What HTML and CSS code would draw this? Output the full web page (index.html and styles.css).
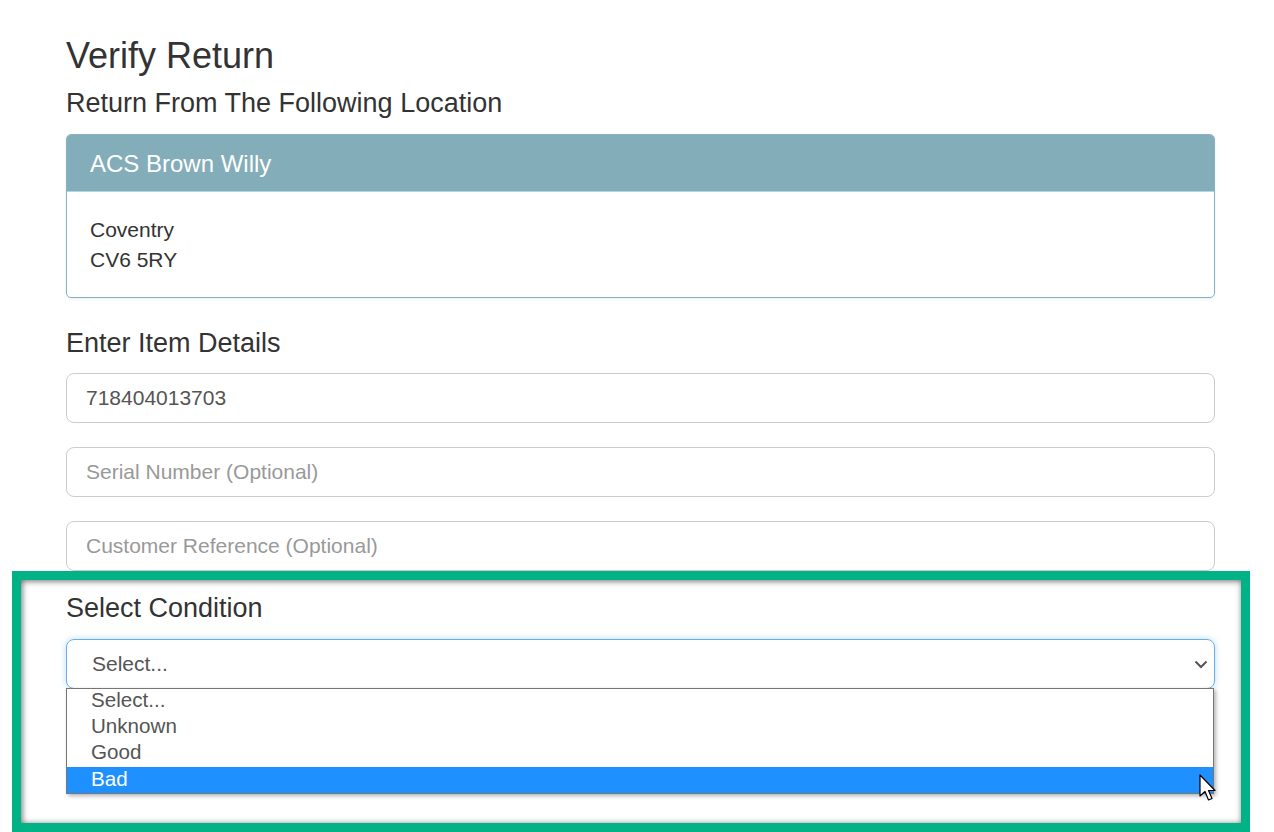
FILE: index.html
```html
<!DOCTYPE html>
<html lang="en">
<head>
    <meta charset="UTF-8">
    <meta name="viewport" content="width=device-width, initial-scale=1.0">
    <title>Verify Return</title>
    <link rel="stylesheet" href="styles.css">
</head>
<body>
    <div class="page">
        <h1 class="title">Verify Return</h1>
        <h2 class="subtitle">Return From The Following Location</h2>

        <div class="card">
            <div class="card-header">ACS Brown Willy</div>
            <div class="card-body">
                <div>Coventry</div>
                <div>CV6 5RY</div>
            </div>
        </div>

        <h2 class="section-title">Enter Item Details</h2>
        <div class="fields">
            <input type="text" class="field" value="718404013703">
            <input type="text" class="field" placeholder="Serial Number (Optional)">
            <input type="text" class="field" placeholder="Customer Reference (Optional)">
        </div>

        <h2 class="section-title condition-title">Select Condition</h2>
        <div class="select-box">
            <span>Select...</span>
            <svg class="chevron" width="14" height="9" viewBox="0 0 14 9">
                <path d="M1.5 1.5 L7 7 L12.5 1.5" fill="none" stroke="#555" stroke-width="2"/>
            </svg>
        </div>
        <ul class="options">
            <li>Select...</li>
            <li>Unknown</li>
            <li>Good</li>
            <li class="active">Bad</li>
        </ul>

        <!-- pointer over the open list -->
        <svg class="cursor" width="20" height="28" viewBox="0 0 20 28">
            <path d="M1 1 L1 22 L6 17.5 L9.5 26 L13 24.5 L9.5 16.5 L16 16.5 Z" fill="#fff" stroke="#000" stroke-width="1.2" stroke-linejoin="round"/>
        </svg>

        <!-- annotation frame -->
        <div class="highlight"></div>
    </div>
</body>
</html>
```

FILE: styles.css
```css
body {
    margin: 0;
    font-family: "Liberation Sans", Arial, sans-serif;
    color: #333;
    background: #fff;
}
.page {
    position: relative;
    height: 832px;
    padding: 37px 59px 0 66px;
    box-sizing: border-box;
    overflow: hidden;
}
.title {
    font-size: 36px;
    font-weight: normal;
    line-height: 38px;
    margin: 0 0 13px;
}
.subtitle,
.section-title {
    font-size: 27px;
    font-weight: normal;
    line-height: 30px;
    margin: 0;
}
.card {
    margin-top: 16px;
    border: 1px solid #84b4c3;
    border-radius: 5px;
    overflow: hidden;
    box-shadow: 0 1px 3px rgba(0, 0, 0, 0.08);
}
.card-header {
    background: #83adb9;
    color: #fff;
    font-size: 24px;
    height: 56px;
    line-height: 58px;
    padding-left: 23px;
    border-bottom: 1px solid #a9dbe4;
}
.card-body {
    font-size: 21px;
    line-height: 30px;
    padding: 23px 23px 22px;
}
.section-title {
    margin-top: 30px;
}
.fields {
    display: flex;
    flex-direction: column;
    gap: 24px;
    margin-top: 15px;
}
.field {
    height: 50px;
    box-sizing: border-box;
    border: 1px solid #ccc;
    border-radius: 8px;
    padding: 0 19px;
    font-family: inherit;
    font-size: 21px;
    color: #555;
    outline: none;
}
.field::placeholder {
    color: #999;
}
.condition-title {
    margin-top: 22px;
}
.select-box {
    margin-top: 16px;
    height: 50px;
    box-sizing: border-box;
    border: 1px solid #66afe9;
    border-radius: 8px;
    box-shadow: 0 0 6px rgba(102, 175, 233, 0.45);
    display: flex;
    align-items: center;
    justify-content: space-between;
    padding: 0 6px 0 25px;
    font-size: 21px;
    color: #555;
}
.chevron {
    display: block;
}
.options {
    list-style: none;
    margin: -1px 1px 0 0;
    padding: 0;
    border: 1px solid #767676;
    background: #fff;
    box-shadow: 2px 2px 4px rgba(0, 0, 0, 0.3);
    font-size: 20.6px;
    color: #555;
    position: relative;
}
.options li {
    height: 26px;
    line-height: 22px;
    padding-left: 24px;
}
.options li.active {
    background: #1e90ff;
    color: #fff;
    line-height: 24px;
}
.cursor {
    position: absolute;
    left: 1199px;
    top: 774px;
}
.highlight {
    position: absolute;
    left: 12px;
    top: 571px;
    width: 1238px;
    height: 261px;
    box-sizing: border-box;
    border: 9px solid #00b286;
    box-shadow: inset 1px 1px 6px rgba(0, 0, 0, 0.6);
    pointer-events: none;
}
```
